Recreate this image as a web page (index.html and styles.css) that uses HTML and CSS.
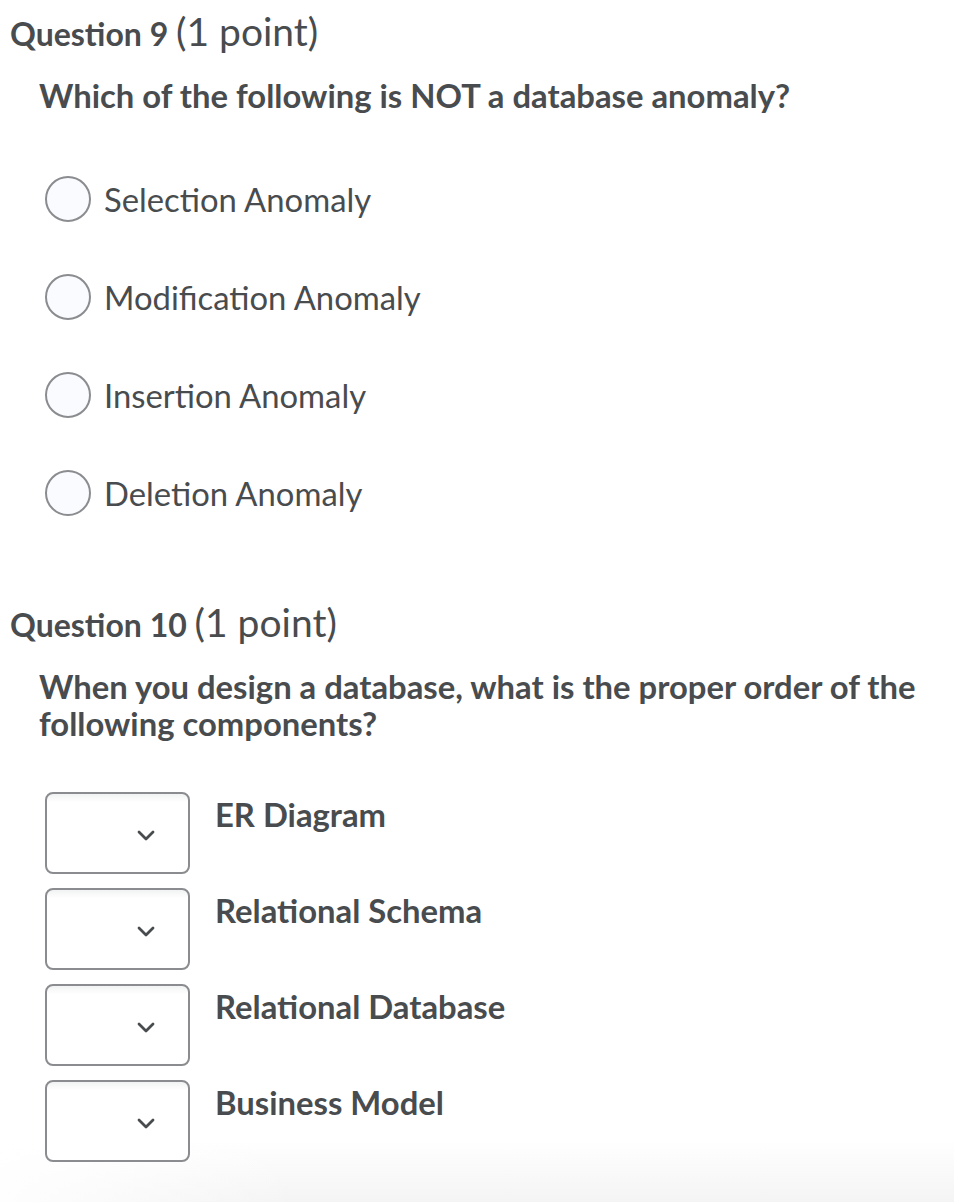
FILE: index.html
```html
<!DOCTYPE html>
<html>
<head>
<meta charset="utf-8">
<link rel="stylesheet" href="styles.css">
</head>
<body>
<div class="page">
  <section class="question q9">
    <h2 class="q-title"><span class="q-num">Question 9</span> <span class="q-pts">(1 point)</span></h2>
    <p class="q-text">Which of the following is NOT a database anomaly?</p>
    <ul class="options">
      <li class="option"><span class="radio"></span><span class="opt-label">Selection Anomaly</span></li>
      <li class="option"><span class="radio"></span><span class="opt-label">Modification Anomaly</span></li>
      <li class="option"><span class="radio"></span><span class="opt-label">Insertion Anomaly</span></li>
      <li class="option"><span class="radio"></span><span class="opt-label">Deletion Anomaly</span></li>
    </ul>
  </section>
  <section class="question q10">
    <h2 class="q-title"><span class="q-num">Question 10</span> <span class="q-pts">(1 point)</span></h2>
    <p class="q-text">When you design a database, what is the proper order of the following components?</p>
    <ul class="orders">
      <li class="order"><span class="select"><svg class="chev" viewBox="0 0 18 11" width="18" height="11"><path d="M2 2 L9 9 L16 2" fill="none" stroke="#494c4e" stroke-width="2.8" stroke-linecap="round" stroke-linejoin="round"/></svg></span><span class="ord-label">ER Diagram</span></li>
      <li class="order"><span class="select"><svg class="chev" viewBox="0 0 18 11" width="18" height="11"><path d="M2 2 L9 9 L16 2" fill="none" stroke="#494c4e" stroke-width="2.8" stroke-linecap="round" stroke-linejoin="round"/></svg></span><span class="ord-label">Relational Schema</span></li>
      <li class="order"><span class="select"><svg class="chev" viewBox="0 0 18 11" width="18" height="11"><path d="M2 2 L9 9 L16 2" fill="none" stroke="#494c4e" stroke-width="2.8" stroke-linecap="round" stroke-linejoin="round"/></svg></span><span class="ord-label">Relational Database</span></li>
      <li class="order"><span class="select"><svg class="chev" viewBox="0 0 18 11" width="18" height="11"><path d="M2 2 L9 9 L16 2" fill="none" stroke="#494c4e" stroke-width="2.8" stroke-linecap="round" stroke-linejoin="round"/></svg></span><span class="ord-label">Business Model</span></li>
    </ul>
  </section>
</div>
</body>
</html>
```
FILE: styles.css
```css
html, body {
  margin: 0;
  padding: 0;
  background: #ffffff;
}
body {
  font-family: Lato, "Open Sans", sans-serif;
  color: #494c4e;
  width: 954px;
  height: 1202px;
  overflow: hidden;
  background:
    linear-gradient(to right, rgba(255,255,255,0.9) 0, rgba(255,255,255,0) 300px),
    linear-gradient(to bottom, #ffffff 0, #ffffff 1140px, #f4f4f4 1202px);
}
.page {
  padding: 8px 0 0 10px;
}
.q-title {
  margin: 0;
  font-weight: 700;
  font-size: 32px;
  line-height: 46px;
}
.q-pts {
  font-weight: 400;
  font-size: 39px;
}
.q-text {
  margin: 20px 0 0 29px;
  font-weight: 700;
  font-size: 32.8px;
  line-height: 37px;
}
.options {
  list-style: none;
  margin: 62px 0 0 35px;
  padding: 0;
  display: flex;
  flex-direction: column;
  gap: 52px;
}
.option {
  display: flex;
  align-items: center;
  gap: 13px;
  height: 46px;
}
.radio {
  box-sizing: border-box;
  width: 46px;
  height: 46px;
  border-radius: 50%;
  border: 2px solid #8a8c8f;
  background: #f9fbff;
}
.opt-label {
  font-size: 32.8px;
  font-weight: 400;
}
.q10 {
  margin-top: 83px;
}
.orders {
  list-style: none;
  margin: 50px 0 0 35px;
  padding: 0;
  display: flex;
  flex-direction: column;
  gap: 14px;
}
.order {
  display: flex;
  align-items: flex-start;
  gap: 25px;
}
.select {
  box-sizing: border-box;
  width: 145px;
  height: 82px;
  border: 2px solid #8a8c8f;
  border-radius: 8px;
  background: linear-gradient(to bottom, #f1f2f3 0, #ffffff 8px);
  display: flex;
  align-items: center;
  justify-content: flex-end;
  padding-right: 33px;
  padding-top: 4px;
}
.ord-label {
  font-size: 32.8px;
  font-weight: 700;
  line-height: 46px;
}
```
